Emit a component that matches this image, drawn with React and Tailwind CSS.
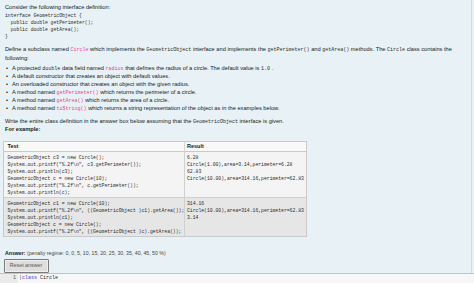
import React from "react";

const mono = "font-['Liberation_Mono',monospace]";

function Code({ children, pink }) {
  return (
    <code className={`${mono} text-[5px] leading-none ${pink ? "text-[#e83e8c]" : "text-[#2b2b2b]"}`}>
      {children}
    </code>
  );
}

const bullets = [
  <>
    A protected <Code>double</Code> data field named <Code pink>radius</Code> that defines the radius of a circle. The default
    value is <Code>1.0</Code> .
  </>,
  <>A default constructor that creates an object with default values.</>,
  <>An overloaded constructor that creates an object with the given radius.</>,
  <>
    A method named <Code pink>getPerimeter()</Code> which returns the perimeter of a circle.
  </>,
  <>
    A method named <Code pink>getArea()</Code> which returns the area of a circle.
  </>,
  <>
    A method named <Code pink>toString()</Code> which returns a string representation of the object as in the examples
    below.
  </>,
];

const rows = [
  {
    test: [
      "GeometricObject c3 = new Circle();",
      'System.out.printf("%.2f\\n", c3.getPerimeter());',
      "System.out.println(c3);",
      "GeometricObject c = new Circle(10);",
      'System.out.printf("%.2f\\n", c.getPerimeter());',
      "System.out.println(c);",
    ],
    result: ["6.28", "Circle(1.00),area=3.14,perimeter=6.28", "62.83", "Circle(10.00),area=314.16,perimeter=62.83"],
    cls: "h-[46px] bg-[#f4f4f4] border-b border-[#d0d0d0]",
  },
  {
    test: [
      "GeometricObject c1 = new Circle(10);",
      'System.out.printf("%.2f\\n", ((GeometricObject )c1).getArea());',
      "System.out.println(c1);",
      "GeometricObject c = new Circle();",
      'System.out.printf("%.2f\\n", ((GeometricObject )c).getArea());',
    ],
    result: ["314.16", "Circle(10.00),area=314.16,perimeter=62.83", "3.14"],
    cls: "h-[38px] bg-[#e6e6e6]",
  },
];

export default function App() {
  return (
    <div className="w-[474px] h-[283px] overflow-hidden bg-[#e8f2f6] font-['Liberation_Sans',Arial,sans-serif] text-[#16191c]">
      <div className="h-[273px] border-r border-[#d3dde1] mr-[2px] pl-[5px] pt-[3px]">
        <p className="text-[5.7px] leading-[8px]">Consider the following interface definition:</p>
        <pre className={`${mono} text-[4.75px] leading-[7.3px] text-[#2b2b2b] mt-[0.5px]`}>
          {"interface GeometricObject {\n  public double getPerimeter();\n  public double getArea();\n}"}
        </pre>
        <p className="text-[5.7px] leading-[9px] mt-[4.8px] pr-[4px]">
          Define a subclass named <Code pink>Circle</Code> which implements the <Code>GeometricObject</Code> interface and
          implements the <Code>getPerimeter()</Code> and <Code>getArea()</Code> methods. The <Code>Circle</Code> class contains
          the following:
        </p>
        <ul className="mt-[1.8px] text-[5.7px] leading-[7.9px]">
          {bullets.map((b, i) => (
            <li key={i} className="flex h-[7.9px]">
              <span className="w-[7px] pl-[1px] shrink-0">•</span>
              <span>{b}</span>
            </li>
          ))}
        </ul>
        <p className="text-[5.7px] leading-[8px] mt-[4px]">
          Write the entire class definition in the answer box below assuming that the <Code>GeometricObject</Code> interface is
          given.
        </p>
        <p className="text-[5.7px] leading-[8px] font-bold">For example:</p>
        <div className="mt-[8px] ml-[-2px] w-[304px] border border-[#c9c9c9]">
          <div className="flex h-[10px] bg-[#f9f9f9] border-b border-[#c9c9c9] text-[5.5px] font-bold leading-[9px]">
            <div className="w-[181px] pl-[3.5px] border-r border-[#d6d6d6]">Test</div>
            <div className="pl-[2px]">Result</div>
          </div>
          {rows.map((r, i) => (
            <div key={i} className={`flex ${r.cls}`}>
              <div className={`${mono} w-[181px] pl-[3.5px] pt-[2px] border-r border-[#d0d0d0] text-[4.75px] leading-[7px] text-[#2b2b2b] whitespace-pre`}>
                {r.test.map((l, j) => (
                  <div key={j}>{l}</div>
                ))}
              </div>
              <div className={`${mono} pl-[2px] pt-[2px] text-[4.75px] leading-[7px] text-[#2b2b2b] whitespace-pre`}>
                {r.result.map((l, j) => (
                  <div key={j}>{l}</div>
                ))}
              </div>
            </div>
          ))}
        </div>
        <p className="mt-[12px] text-[5.2px] leading-[8px]">
          <span className="font-bold">Answer:</span>{" "}
          <span className="text-[#444]">(penalty regime: 0, 0, 5, 10, 15, 20, 25, 30, 35, 40, 45, 50 %)</span>
        </p>
        <button className="block mt-[2px] ml-[-1.5px] h-[14px] w-[45px] border border-[#7a7a7a] rounded-[1px] bg-[#dedede] shadow-[inset_0_0_0_1px_#f0f0f0] text-[5.3px] text-[#555]">
          Reset answer
        </button>
      </div>
      <div className="h-[10px] border-t border-[#c4c4c4] flex bg-[#f7f7f7]">
        <div className={`${mono} w-[18px] bg-[#ebebeb] text-right pr-[2px] text-[5px] leading-[9px] text-[#555]`}>1</div>
        <div className={`${mono} text-[5px] leading-[9px] pl-[1px] text-[#222]`}>
          <span className="text-[#444]">|</span>
          <span className="text-[#3b3bd6]">class</span> Circle
        </div>
      </div>
    </div>
  );
}
